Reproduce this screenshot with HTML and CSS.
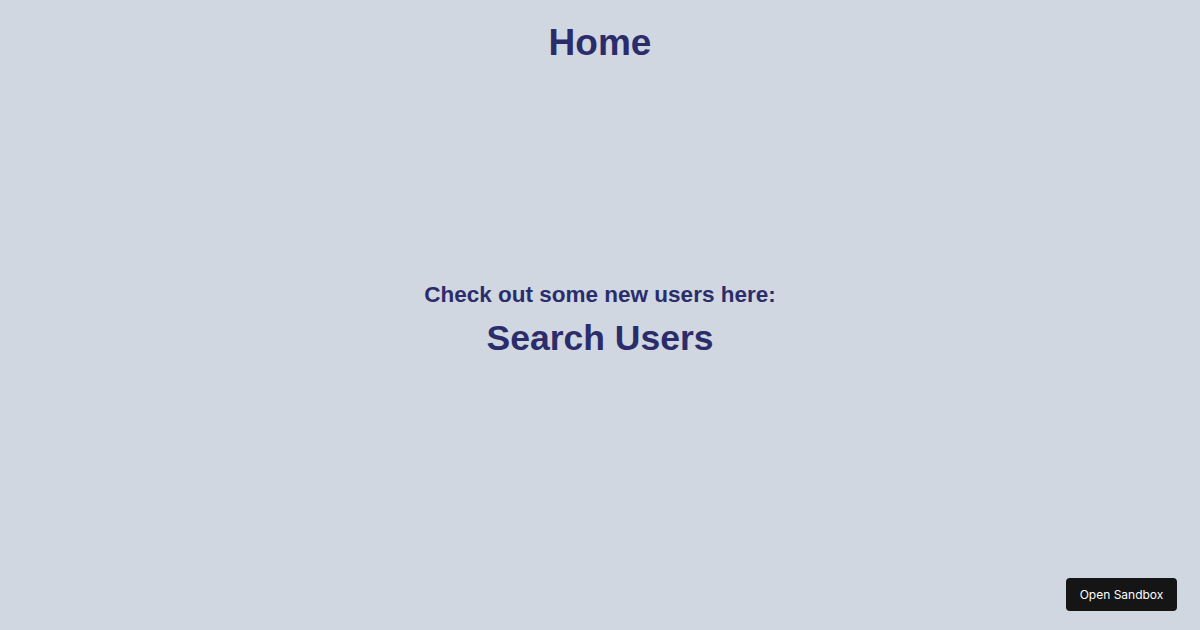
FILE: index.html
```html
<!DOCTYPE html>
<html>
<head>
<meta charset="utf-8">
<link rel="stylesheet" href="styles.css">
</head>
<body>
<div class="app">
  <h1 class="title">Home</h1>
  <section class="promo">
    <h3 class="promo-text">Check out some new users here:</h3>
    <h2 class="promo-link">Search Users</h2>
  </section>
</div>
<a class="sandbox-btn">Open Sandbox</a>
</body>
</html>
```
FILE: styles.css
```css
html, body {
  margin: 0;
  padding: 0;
  height: 100%;
}
body {
  background: #d1d7e0;
  font-family: "Liberation Sans", Arial, sans-serif;
  color: #2b2d6b;
}
.app {
  display: flex;
  flex-direction: column;
  align-items: center;
  text-align: center;
}
.title {
  margin: 22px 0 0;
  font-size: 37px;
  font-weight: bold;
  line-height: 42px;
}
.promo {
  margin-top: 218px;
  display: flex;
  flex-direction: column;
  align-items: center;
  gap: 10px;
}
.promo-text {
  margin: 0;
  font-size: 22.5px;
  line-height: 26px;
  font-weight: bold;
}
.promo-link {
  margin: 0;
  font-size: 35.5px;
  line-height: 41px;
  font-weight: bold;
}
.sandbox-btn {
  position: fixed;
  right: 23px;
  bottom: 19px;
  width: 111px;
  height: 33px;
  box-sizing: border-box;
  display: flex;
  align-items: center;
  justify-content: center;
  background: #151515;
  color: #ffffff;
  border-radius: 4px;
  font-family: Inter, "Liberation Sans", sans-serif;
  font-size: 12px;
  text-decoration: none;
}
```
